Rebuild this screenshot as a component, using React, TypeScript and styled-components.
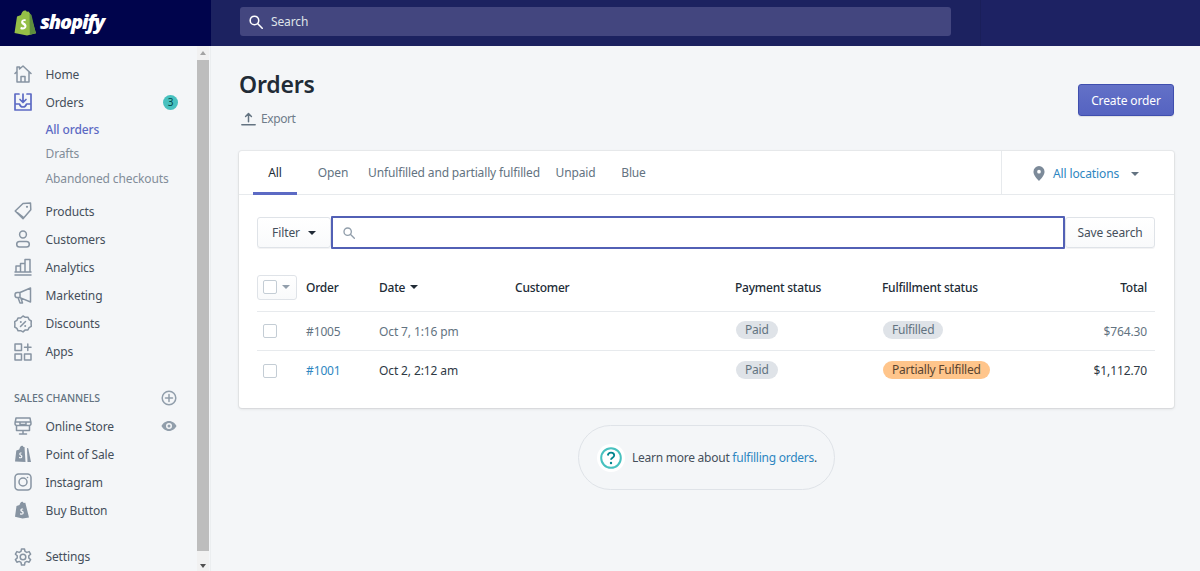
import { ReactNode } from 'react';
import styled, { createGlobalStyle } from 'styled-components';

const Global = createGlobalStyle`
  html, body { margin: 0; padding: 0; height: 100%; overflow: hidden; }
  body {
    background: #f4f6f8;
    color: #212b36;
    font-family: "Noto Sans", "Open Sans", sans-serif;
    font-size: 12px;
    letter-spacing: -0.12px;
  }
  * { box-sizing: border-box; }
`;

const Page = styled.div`
  width: 1200px;
  height: 571px;
  display: flex;
  flex-direction: column;
  overflow: hidden;
`;

const TopBar = styled.header`
  height: 46px;
  flex: none;
  display: flex;
  background: #1c2260;
`;

const LogoArea = styled.div`
  width: 211px;
  display: flex;
  align-items: center;
  gap: 4px;
  padding-left: 14px;
  background: #00044c;
`;

const LogoText = styled.span`
  color: #fff;
  font-family: "Open Sans", sans-serif;
  font-size: 20px;
  font-weight: 800;
  font-style: italic;
  letter-spacing: -1.2px;
  line-height: 1;
  margin-top: -3px;
`;

const SearchZone = styled.div`
  width: 769px;
  padding: 7px 29px;
`;

const TopSearch = styled.div`
  height: 29px;
  display: flex;
  align-items: center;
  gap: 8px;
  padding-left: 9px;
  background: #43467f;
  border-radius: 3px;
  color: #dfe3e8;
`;

const TopRight = styled.div`
  flex: 1;
  border-left: 1px solid #1a1f5a;
  background: #1d2263;
`;

const Body = styled.div`
  flex: 1;
  display: flex;
  min-height: 0;
`;

const Sidebar = styled.aside`
  width: 211px;
  flex: none;
  display: flex;
  border-right: 1px solid #ebeef0;
`;

const Nav = styled.nav`
  flex: 1;
  padding-top: 14px;
  display: flex;
  flex-direction: column;
`;

const NavItem = styled.div`
  height: 28.1px;
  flex: none;
  display: flex;
  align-items: center;
  padding-left: 14px;
  color: #454f5b;
`;

const NavIcon = styled.span`
  width: 31.5px;
  flex: none;
  display: flex;
  align-items: center;
`;

const NavLabel = styled.span`
  flex: 1;
  color: #454f5b;
`;

const Count = styled.span`
  width: 15px;
  height: 15px;
  margin-right: 19px;
  border-radius: 50%;
  background: #47c1bf;
  color: #00484b;
  font-size: 10px;
  line-height: 15px;
  text-align: center;
`;

const SideAction = styled.span`
  width: 16px;
  height: 16px;
  margin-right: 20px;
  display: flex;
  color: #919eab;
`;

const SubItem = styled.div<{ $active?: boolean }>`
  height: 24.5px;
  flex: none;
  display: flex;
  align-items: center;
  padding-left: 45.5px;
  color: ${p => (p.$active ? '#5c6ac4' : '#828d99')};
  font-weight: ${p => (p.$active ? 500 : 400)};
`;

const NavGap = styled.div<{ $size: number }>`
  height: ${p => p.$size}px;
  flex: none;
`;

const SectionTitle = styled.div`
  height: 20px;
  flex: none;
  display: flex;
  align-items: center;
  justify-content: space-between;
  padding-left: 14px;
  color: #637381;
  font-size: 10.5px;
  font-weight: 500;
`;

const Scrollbar = styled.div`
  width: 12px;
  flex: none;
  margin-right: 1px;
  display: flex;
  flex-direction: column;
  align-items: stretch;
  background: #f1f1f1;
`;

const ScrollArrow = styled.div<{ $down?: boolean }>`
  height: ${p => (p.$down ? '20px' : '14px')};
  flex: none;
  display: flex;
  align-items: ${p => (p.$down ? 'flex-end' : 'center')};
  justify-content: center;
  padding-bottom: ${p => (p.$down ? '3px' : '0')};
  &::after {
    content: '';
    border-left: 3.5px solid transparent;
    border-right: 3.5px solid transparent;
    ${p => (p.$down ? 'border-top: 4px solid #505050;' : 'border-bottom: 4px solid #a3a3a3;')}
  }
`;

const ScrollThumb = styled.div`
  height: 491px;
  flex: none;
  background: #bdbdbd;
`;

const Main = styled.main`
  flex: 1;
  padding: 23px 26px 0 28px;
  display: flex;
  flex-direction: column;
`;

const PageHead = styled.div`
  height: 82px;
  flex: none;
  display: flex;
  justify-content: space-between;
`;

const Title = styled.h1`
  margin: 0;
  color: #212b36;
  font-size: 23px;
  font-weight: 600;
  letter-spacing: -0.2px;
  line-height: 30px;
`;

const ExportLink = styled.div`
  display: flex;
  align-items: center;
  gap: 5px;
  margin: 9px 0 0 2px;
  height: 20px;
  color: #6f7c8a;
  letter-spacing: -0.4px;
`;

const CreateButton = styled.button`
  width: 96px;
  height: 32px;
  margin-top: 15px;
  border: 1px solid #3f4eae;
  border-radius: 3px;
  background: linear-gradient(180deg, #6371c7, #5563c1);
  color: #fff;
  font: inherit;
  letter-spacing: inherit;
  box-shadow: 0 1px 1px rgba(22, 29, 37, 0.1);
`;

const Card = styled.section`
  height: 257px;
  flex: none;
  background: #fff;
  border-radius: 3px;
  box-shadow: 0 0 0 1px rgba(63, 63, 68, 0.05), 0 1px 3px 0 rgba(63, 63, 68, 0.15);
`;

const TabBar = styled.div`
  height: 44px;
  display: flex;
  border-bottom: 1px solid #e7eaed;
`;

const Tabs = styled.div`
  flex: 1;
  display: flex;
  padding-left: 14px;
`;

const Tab = styled.div<{ $active?: boolean; $width: number }>`
  width: ${p => p.$width}px;
  height: 44px;
  flex: none;
  display: flex;
  align-items: center;
  justify-content: center;
  white-space: nowrap;
  letter-spacing: -0.15px;
  color: ${p => (p.$active ? '#212b36' : '#637381')};
  border-bottom: 3px solid ${p => (p.$active ? '#5c6ac4' : 'transparent')};
  padding-top: 1px;
`;

const LocationPicker = styled.div`
  width: 173px;
  display: flex;
  align-items: center;
  padding: 2px 0 0 31px;
  gap: 8px;
  border-left: 1px solid #e7eaed;
  color: #2e86c1;
`;

const Caret = styled.span<{ $color?: string; $gap?: number }>`
  display: inline-block;
  margin-left: ${p => p.$gap || 0}px;
  border-left: 4px solid transparent;
  border-right: 4px solid transparent;
  border-top: 4px solid ${p => p.$color || '#212b36'};
`;

const FilterRow = styled.div`
  height: 31px;
  margin: 22px 19px 0 18px;
  display: flex;
`;

const SideButton = styled.div<{ $width: number }>`
  width: ${p => p.$width}px;
  flex: none;
  display: flex;
  align-items: center;
  justify-content: center;
  gap: 8px;
  color: #454f5b;
  background: linear-gradient(180deg, #fff, #f9fafb);
  border: 1px solid #dfe3e8;
  border-radius: 3px;
  box-shadow: 0 1px 0 rgba(22, 29, 37, 0.05);
`;

const SearchInput = styled.div`
  flex: 1;
  display: flex;
  align-items: center;
  margin: -1px 0;
  padding-left: 10px;
  border: 2px solid #5260b5;
  border-radius: 1px;
  background: #fff;
`;

const Grid = styled.div`
  margin: 0 19px 0 18px;
  display: grid;
  grid-template-columns: 49px 73px 136px 220px 147px 1fr 90px;
`;

const HeadRow = styled(Grid)`
  height: 64px;
  align-items: center;
  padding-top: 15px;
  border-bottom: 1px solid #e7eaed;
  color: #212b36;
  font-weight: 500;
  letter-spacing: -0.22px;
`;

const OrderRow = styled(Grid)<{ $last?: boolean; $muted?: boolean }>`
  height: 39px;
  align-items: center;
  color: ${p => (p.$muted ? '#637381' : '#2f3a45')};
  border-bottom: ${p => (p.$last ? 'none' : '1px solid #e7eaed')};
`;

const BoxGroup = styled.div`
  width: 40px;
  height: 25px;
  display: flex;
  align-items: center;
  gap: 5px;
  padding-left: 5px;
  border: 1px solid #dfe3e8;
  border-radius: 3px;
  background: linear-gradient(180deg, #fff, #f9fafb);
`;

const Check = styled.span<{ $inRow?: boolean }>`
  width: 14px;
  height: 14px;
  display: block;
  margin-left: ${p => (p.$inRow ? '6px' : '0')};
  border: 1px solid #c4cdd5;
  border-radius: 2px;
  background: #fff;
`;

const HeadDate = styled.span`
  display: flex;
  align-items: center;
  gap: 5px;
`;

const OrderLink = styled.span`
  color: #2e86c1;
`;

const Badge = styled.span<{ $tone?: 'warn' }>`
  display: inline-block;
  height: 18px;
  margin: -3px 0 2px 1px;
  padding: 0 9px;
  border-radius: 9px;
  background: ${p => (p.$tone ? '#ffc58b' : '#dfe3e8')};
  color: ${p => (p.$tone ? '#594430' : '#637381')};
  letter-spacing: -0.22px;
  line-height: 18px;
`;

const Total = styled.span`
  text-align: right;
  padding-right: 8px;
`;

const HelpWrap = styled.div`
  display: flex;
  justify-content: center;
  margin-top: 17px;
`;

const HelpPill = styled.div`
  width: 257px;
  height: 65px;
  display: flex;
  align-items: center;
  gap: 7px;
  padding-left: 18px;
  border: 1px solid #dfe3e8;
  border-radius: 33px;
  color: #454f5b;
  letter-spacing: -0.25px;
`;

const HelpIcon = styled.span`
  width: 28px;
  height: 28px;
  flex: none;
  display: flex;
  align-items: center;
  justify-content: center;
  border-radius: 50%;
  background: #fff;
`;

const line = {
  fill: 'none',
  stroke: 'currentColor',
  strokeWidth: 1.5,
  strokeLinecap: 'round' as const,
  strokeLinejoin: 'round' as const,
};

const Svg = ({ children, size = 18, color = '#8794a2' }: { children: ReactNode; size?: number; color?: string }) => (
  <svg width={size} height={size} viewBox="0 0 18 18" style={{ color, display: 'block' }}>
    {children}
  </svg>
);

const icons: Record<string, ReactNode> = {
  home: (
    <Svg>
      <path {...line} d="M1 8.500 3 6.500V2h2.500v2L9 1l8 7.500M3 7v10h12V7M7 17v-5.500h4V17" />
    </Svg>
  ),
  orders: (
    <Svg color="#5c6ac4">
      <path {...line} strokeWidth={1.7} d="M5 1H1v16h16V1h-4M1 11h4.500c.5 2 1.800 3 3.500 3s3-1 3.500-3H17M9 1v8M6 6.500 9 9.500l3-3" />
    </Svg>
  ),
  products: (
    <Svg>
      <path {...line} d="M1.200 9 9 1.500l7.500-.5.3 6.800L9 16.800zM3.600 10.800l5.400 4.400" />
      <circle cx="13" cy="4.800" r="1.100" fill="currentColor" />
    </Svg>
  ),
  customers: (
    <Svg>
      <circle {...line} cx="9" cy="4.500" r="3.400" />
      <rect {...line} x="2.700" y="11.400" width="12.600" height="5.600" rx="2.800" />
    </Svg>
  ),
  analytics: (
    <Svg>
      <path {...line} d="M1 17h16M1 14h16M2 14V8h4.500v6M6.500 14V5.500H11V14M11 14V1.500h5V14" />
    </Svg>
  ),
  marketing: (
    <Svg>
      <path {...line} d="M16.500 1 6 5.500H3.200C1.900 5.500 1 6.500 1 8s.9 2.600 2.200 2.600H6L16.500 15zM6 5.500v5M4 10.500 6 16h2.500L7 11.300" />
    </Svg>
  ),
  discounts: (
    <Svg>
      <path {...line} d="M9 1l2.300 1.300 2.600-.1 1.200 2.400 2.200 1.400-.2 2.600.2 2.700-2.200 1.300-1.200 2.400-2.600-.1L9 16.900l-2.300-1.200-2.600.1-1.200-2.400L.7 12l.2-2.700-.2-2.600 2.200-1.400 1.200-2.400 2.600.1z" />
      <path {...line} d="m6.500 11.500 5-5" />
      <circle cx="6.800" cy="7" r="1" fill="currentColor" />
      <circle cx="11.200" cy="11" r="1" fill="currentColor" />
    </Svg>
  ),
  apps: (
    <Svg>
      <path {...line} d="M1 1h6.500v6.500H1zM1 11h6.500v6H1zM10.500 11H17v6h-6.500zM13.800 1v6.500M10.500 4.200H17" />
    </Svg>
  ),
  store: (
    <Svg>
      <path {...line} d="M2 1h14l1 5.500c0 1-1 2-2 2H3c-1 0-2-1-2-2zM1 5h16M2.500 8.500v5h13v-5M6 5.500V7.500h6V5.500M5.500 17h7M9 13.500V17" />
    </Svg>
  ),
  pos: (
    <Svg>
      <path fill="currentColor" d="M1 16.500 2.300 5.500l3-1C5.800 2.500 6.700.8 8 .8c.7 0 1.200.5 1.500 1.200l1 .1L11.500 17z" />
      <path fill="#f4f6f8" d="M7.500 7.500c-1.400-.3-2.300.5-2.300 1.500 0 1.500 2 1.500 2 2.600 0 .7-1 .8-2 .2l-.3 1.300c1.800.7 3.500 0 3.500-1.700 0-1.700-2-1.800-2-2.500 0-.5.6-.7 1.500-.4z" />
      <path fill="currentColor" d="m13 3 1.200.3L17 17h-3.500z" />
    </Svg>
  ),
  instagram: (
    <Svg>
      <rect {...line} x="1" y="1" width="16" height="16" rx="3.500" />
      <circle {...line} cx="9" cy="9" r="4" />
      <circle cx="13.500" cy="4.500" r="0.800" fill="currentColor" />
    </Svg>
  ),
  buy: (
    <Svg>
      <path fill="currentColor" d="M1 15.800 2.500 5l3-1C6 2.200 6.900.8 8.100.8c.7 0 1.200.5 1.500 1.200l1.700-.3L15 16.500 8.500 17.500z" />
      <path fill="#f4f6f8" d="M9 7.500c-1.500-.3-2.700.5-2.700 1.700 0 1.600 2.200 1.600 2.200 2.700 0 .7-1.200.8-2.200.2l-.3 1.300c1.900.8 3.800 0 3.800-1.700 0-1.800-2.200-1.800-2.200-2.600 0-.5.7-.7 1.700-.4z" />
    </Svg>
  ),
  settings: (
    <Svg>
      <path {...line} d="M7.500 1h3l.5 2.400 1.800 1 2.300-.8 1.500 2.600-1.800 1.600v2.200l1.800 1.600-1.500 2.600-2.300-.8-1.800 1L10.500 17h-3L7 14.400l-1.800-1-2.300.8-1.500-2.600 1.800-1.600V7.800L1.400 6.200l1.500-2.600 2.300.8 1.800-1z" />
      <circle {...line} cx="9" cy="9" r="2.800" />
    </Svg>
  ),
};

const mainNav: [string, string][] = [
  ['products', 'Products'],
  ['customers', 'Customers'],
  ['analytics', 'Analytics'],
  ['marketing', 'Marketing'],
  ['discounts', 'Discounts'],
  ['apps', 'Apps'],
];

const channels: [string, string][] = [
  ['store', 'Online Store'],
  ['pos', 'Point of Sale'],
  ['instagram', 'Instagram'],
  ['buy', 'Buy Button'],
];

const SearchGlyph = ({ size, color }: { size: number; color: string }) => (
  <Svg size={size} color={color}>
    <circle {...line} strokeWidth={2} cx="7" cy="7" r="5.500" />
    <path {...line} strokeWidth={2} d="m11 11 6 6" />
  </Svg>
);

export default function App() {
  return (
    <Page>
      <Global />
      <TopBar>
        <LogoArea>
          <svg width="22" height="26" viewBox="0 0 22 26">
            <path fill="#95bf47" d="M.5 23 3 6.500 7 5C7.600 2.600 9 .6 11 .6c.9 0 1.500.5 1.800 1.200l1.700-.2 1.500 2L22 23.300 13 25.500z" />
            <path fill="#5e8e3e" d="M15.500 3.300 17.500 5 21.800 23.300 15.800 24.800z" />
            <path fill="#fff" d="M11.800 9.500c-2.700-.8-4.700.8-4.700 2.700 0 2.600 3.300 2.600 3.300 4.300 0 1.200-1.900 1.200-3.500.2l-.6 2.200c3 1.300 6.200 0 6.200-2.900 0-3-3.300-3.200-3.300-4.200 0-.8 1-1.200 2.300-.6z" />
          </svg>
          <LogoText>shopify</LogoText>
        </LogoArea>
        <SearchZone>
          <TopSearch>
            <SearchGlyph size={14} color="#ffffff" />
            Search
          </TopSearch>
        </SearchZone>
        <TopRight />
      </TopBar>
      <Body>
        <Sidebar>
          <Nav>
            <NavItem>
              <NavIcon>{icons.home}</NavIcon>
              <NavLabel>Home</NavLabel>
            </NavItem>
            <NavItem>
              <NavIcon>{icons.orders}</NavIcon>
              <NavLabel>Orders</NavLabel>
              <Count>3</Count>
            </NavItem>
            <NavGap $size={0.7} />
            <SubItem $active>All orders</SubItem>
            <SubItem>Drafts</SubItem>
            <SubItem>Abandoned checkouts</SubItem>
            <NavGap $size={6.8} />
            {mainNav.map(([icon, label]) => (
              <NavItem key={icon}>
                <NavIcon>{icons[icon]}</NavIcon>
                <NavLabel>{label}</NavLabel>
              </NavItem>
            ))}
            <NavGap $size={22} />
            <SectionTitle>
              SALES CHANNELS
              <SideAction>
                <svg width="16" height="16" viewBox="0 0 16 16">
                  <circle {...line} cx="8" cy="8" r="6.800" />
                  <path {...line} d="M8 4.500v7M4.500 8h7" />
                </svg>
              </SideAction>
            </SectionTitle>
            <NavGap $size={4.4} />
            {channels.map(([icon, label]) => (
              <NavItem key={icon}>
                <NavIcon>{icons[icon]}</NavIcon>
                <NavLabel>{label}</NavLabel>
                {icon === 'store' && (
                  <SideAction>
                    <svg width="16" height="16" viewBox="0 0 16 16">
                      <path fill="currentColor" fillRule="evenodd" d="M8 3c3.500 0 6.300 2.500 7.500 5-1.200 2.500-4 5-7.500 5S1.700 10.500.5 8C1.700 5.500 4.500 3 8 3zm0 2a3 3 0 1 0 0 6 3 3 0 0 0 0-6z" />
                      <circle cx="8" cy="8" r="1.500" fill="currentColor" />
                    </svg>
                  </SideAction>
                )}
              </NavItem>
            ))}
            <NavGap $size={18} />
            <NavItem>
              <NavIcon>{icons.settings}</NavIcon>
              <NavLabel>Settings</NavLabel>
            </NavItem>
          </Nav>
          <Scrollbar>
            <ScrollArrow />
            <ScrollThumb />
            <ScrollArrow $down />
          </Scrollbar>
        </Sidebar>
        <Main>
          <PageHead>
            <div>
              <Title>Orders</Title>
              <ExportLink>
                <Svg size={15} color="#637381">
                  <path {...line} strokeWidth={1.800} d="M9 13V3M5.500 6.500 9 3l3.500 3.500M1 16.500h16" />
                </Svg>
                Export
              </ExportLink>
            </div>
            <CreateButton>Create order</CreateButton>
          </PageHead>
          <Card>
            <TabBar>
              <Tabs>
                <Tab $active $width={44}>All</Tab>
                <Tab $width={72}>Open</Tab>
                <Tab $width={170}>Unfulfilled and partially fulfilled</Tab>
                <Tab $width={73}>Unpaid</Tab>
                <Tab $width={43}>Blue</Tab>
              </Tabs>
              <LocationPicker>
                <svg width="12" height="15" viewBox="0 0 13 16">
                  <path fill="#7c8a99" fillRule="evenodd" d="M6.500 0A6 6 0 0 1 12.500 6c0 3.500-3.500 7.500-6 10C4 13.500.5 9.500.5 6a6 6 0 0 1 6-6zm0 4a2 2 0 1 0 0 4 2 2 0 0 0 0-4z" />
                </svg>
                All locations
                <Caret $color="#637381" $gap={4} />
              </LocationPicker>
            </TabBar>
            <FilterRow>
              <SideButton $width={74}>
                Filter <Caret />
              </SideButton>
              <SearchInput>
                <SearchGlyph size={12} color="#919eab" />
              </SearchInput>
              <SideButton $width={90}>Save search</SideButton>
            </FilterRow>
            <HeadRow>
              <BoxGroup>
                <Check />
                <Caret $color="#919eab" />
              </BoxGroup>
              <span>Order</span>
              <HeadDate>
                Date <Caret />
              </HeadDate>
              <span>Customer</span>
              <span>Payment status</span>
              <span>Fulfillment status</span>
              <Total>Total</Total>
            </HeadRow>
            <OrderRow $muted>
              <Check $inRow />
              <span>#1005</span>
              <span>Oct 7, 1:16 pm</span>
              <span />
              <span><Badge>Paid</Badge></span>
              <span><Badge>Fulfilled</Badge></span>
              <Total>$764.30</Total>
            </OrderRow>
            <OrderRow $last>
              <Check $inRow />
              <OrderLink>#1001</OrderLink>
              <span>Oct 2, 2:12 am</span>
              <span />
              <span><Badge>Paid</Badge></span>
              <span><Badge $tone="warn">Partially Fulfilled</Badge></span>
              <Total>$1,112.70</Total>
            </OrderRow>
          </Card>
          <HelpWrap>
            <HelpPill>
              <HelpIcon>
                <svg width="22" height="22" viewBox="0 0 22 22">
                  <circle cx="11" cy="11" r="9.800" fill="none" stroke="#47c1bf" strokeWidth="2" />
                  <path d="M7.800 8.500c.3-2 1.700-2.800 3.200-2.800 1.800 0 3.200 1 3.200 2.700 0 2.300-3.200 2.300-3.200 4.300" fill="none" stroke="#00848e" strokeWidth="1.800" />
                  <circle cx="11" cy="16" r="1.200" fill="#00848e" />
                </svg>
              </HelpIcon>
              <span>
                Learn more about <OrderLink>fulfilling orders</OrderLink>.
              </span>
            </HelpPill>
          </HelpWrap>
        </Main>
      </Body>
    </Page>
  );
}
